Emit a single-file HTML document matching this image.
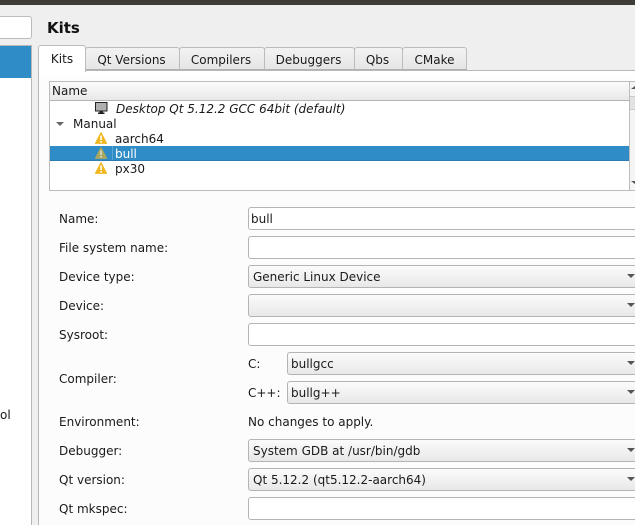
<!DOCTYPE html>
<html><head><meta charset="utf-8"><style>
html,body{margin:0;padding:0;width:635px;height:525px;overflow:hidden}
body{background:#efefef;font:12px/14px "DejaVu Sans",sans-serif;color:#1a1a1a}
#w{position:absolute;left:0;top:0;width:635px;height:525px;overflow:hidden}
#w div,#w span{position:absolute;box-sizing:border-box;white-space:nowrap}
#w .tab{top:47px;height:23px;background:linear-gradient(#f2f2f2,#e6e6e6);border:1px solid #bcbcbc;border-bottom:1px solid #b0b0b0;border-radius:3px 3px 0 0;text-align:center;line-height:24px;padding-right:2px}
.l{left:59px}
#w .f{left:248px;width:400px;height:23px;border:1px solid #b4b4b4;border-radius:3px;background:#fff;line-height:23px;padding-left:2px}
#w .c{left:248px;width:400px;height:23px;border:1px solid #b4b4b4;border-radius:3px;background:linear-gradient(#fbfbfb,#e8e8e8);line-height:23px;padding-left:4px}
#w .a{left:378px;top:8px;width:0;height:0;border-left:4px solid transparent;border-right:4px solid transparent;border-top:4px solid #555}
svg{position:absolute}
</style></head><body><div id="w">
<div style="left:0;top:0;width:635px;height:5px;background:#3f3c37"></div>

<div style="left:-5px;top:16px;width:37px;height:23px;background:#fff;border:1px solid #bcbcbc;border-radius:3px"></div>
<div style="left:0;top:45px;width:32px;height:480px;background:#fff;border-right:1px solid #b8b8b8;border-top:1px solid #b8b8b8"></div>
<div style="left:0;top:46px;width:31px;height:32px;background:#308cc6"></div>
<span style="left:0;top:408px">ol</span>

<span style="left:47px;top:19px;font-size:15px;line-height:18px;font-weight:bold;color:#111">Kits</span>

<div style="left:38px;top:70px;width:600px;height:460px;background:#fcfcfc;border:1px solid #b8b8b8"></div>
<div style="left:39px;top:71px;width:600px;height:12px;background:linear-gradient(#fff,#fcfcfc)"></div>
<div class="tab" style="left:85px;width:95px">Qt Versions</div>
<div class="tab" style="left:179px;width:86px">Compilers</div>
<div class="tab" style="left:264px;width:91px">Debuggers</div>
<div class="tab" style="left:354px;width:49px">Qbs</div>
<div class="tab" style="left:402px;width:65px;padding-right:0">CMake</div>
<div style="left:38px;top:45px;width:48px;height:27px;background:#fff;border:1px solid #bcbcbc;border-bottom:0;border-radius:3px 3px 0 0;text-align:center;line-height:26px">Kits</div>

<div style="left:49px;top:81px;width:590px;height:110px;background:#fff;border:1px solid #bcbcbc"></div>
<div style="left:50px;top:82px;width:579px;height:19px;background:linear-gradient(#fbfbfb,#e9e9e9);border-bottom:1px solid #b4b4b4;padding-left:2px;line-height:19px">Name</div>
<div style="left:629px;top:82px;width:1px;height:108px;background:#bcbcbc"></div>
<div style="left:630px;top:82px;width:5px;height:108px;background:#f4f4f4"></div>
<div style="left:630px;top:96px;width:5px;height:14px;background:#e2e2e2;border-top:1px solid #ccc;border-bottom:1px solid #ccc"></div>
<div style="left:631px;top:86px;width:0;height:0;border-left:4px solid transparent;border-right:4px solid transparent;border-bottom:3px solid #555"></div>
<div style="left:631px;top:181px;width:0;height:0;border-left:4px solid transparent;border-right:4px solid transparent;border-top:3px solid #555"></div>

<div style="left:50px;top:146px;width:579px;height:15px;background:#308cc6;border-bottom:1px solid #2a7db2"></div>
<div style="left:112px;top:146px;width:1px;height:14px;background:#5aa5d4"></div>

<svg style="left:95px;top:102px" width="13" height="12" viewBox="0 0 13 12"><rect x="0.5" y="0.5" width="11.5" height="8.5" fill="#b0b0b0" stroke="#222"/><rect x="4.5" y="9.5" width="3.5" height="1.5" fill="#222"/><rect x="3" y="10.5" width="6.5" height="1.5" fill="#222"/></svg>
<span style="left:116px;top:102px;font-style:italic">Desktop Qt 5.12.2 GCC 64bit (default)</span>
<div style="left:56px;top:122px;width:0;height:0;border-left:4px solid transparent;border-right:4px solid transparent;border-top:4px solid #666"></div>
<span style="left:73px;top:117px">Manual</span>

<svg style="left:95px;top:132px" width="12" height="12" viewBox="0 0 12 12"><path d="M6 .8L11.5 11.3H.5Z" fill="#efb820" stroke="#efb820" stroke-width="1.2" stroke-linejoin="round"/><rect x="5.2" y="3.5" width="1.6" height="4.5" fill="#fff"/><rect x="5.2" y="9" width="1.6" height="1.6" fill="#fff"/></svg>
<span style="left:115px;top:132px">aarch64</span>
<svg style="left:95px;top:147px" width="12" height="12" viewBox="0 0 12 12"><path d="M6 .8L11.5 11.3H.5Z" fill="#aaa85e" stroke="#aaa85e" stroke-width="1.2" stroke-linejoin="round"/><rect x="5.2" y="3.5" width="1.6" height="4.5" fill="#d8dfc8"/><rect x="5.2" y="9" width="1.6" height="1.6" fill="#d8dfc8"/></svg>
<span style="left:115px;top:147px;color:#fff">bull</span>
<svg style="left:95px;top:162px" width="12" height="12" viewBox="0 0 12 12"><path d="M6 .8L11.5 11.3H.5Z" fill="#efb820" stroke="#efb820" stroke-width="1.2" stroke-linejoin="round"/><rect x="5.2" y="3.5" width="1.6" height="4.5" fill="#fff"/><rect x="5.2" y="9" width="1.6" height="1.6" fill="#fff"/></svg>
<span style="left:115px;top:162px">px30</span>

<span class="l" style="top:212px">Name:</span>
<span class="l" style="top:241px">File system name:</span>
<span class="l" style="top:270px">Device type:</span>
<span class="l" style="top:299px">Device:</span>
<span class="l" style="top:328px">Sysroot:</span>
<span class="l" style="top:372px">Compiler:</span>
<span class="l" style="top:415px">Environment:</span>
<span class="l" style="top:444px">Debugger:</span>
<span class="l" style="top:473px">Qt version:</span>
<span class="l" style="top:502px">Qt mkspec:</span>

<div class="f" style="top:207px">bull</div>
<div class="f" style="top:236px"></div>
<div class="c" style="top:265px">Generic Linux Device<div class="a"></div></div>
<div class="c" style="top:294px"><div class="a"></div></div>
<div class="f" style="top:323px"></div>
<span style="left:248px;top:357px">C:</span>
<div class="c" style="top:352px;left:287px;width:361px;padding-left:3px">bullgcc<div class="a" style="left:339px"></div></div>
<span style="left:248px;top:386px">C++:</span>
<div class="c" style="top:381px;left:287px;width:361px;padding-left:3px">bullg++<div class="a" style="left:339px"></div></div>
<span style="left:248px;top:415px">No changes to apply.</span>
<div class="c" style="top:439px">System GDB at /usr/bin/gdb<div class="a"></div></div>
<div class="c" style="top:468px">Qt 5.12.2 (qt5.12.2-aarch64)<div class="a"></div></div>
<div class="f" style="top:497px"></div>
</div></body></html>
